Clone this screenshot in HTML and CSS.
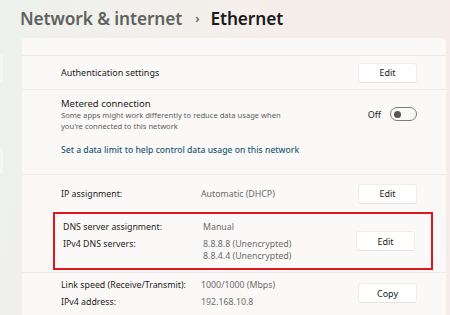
FILE: index.html
```html
<!DOCTYPE html>
<html>
<head>
<meta charset="utf-8">
<link rel="stylesheet" href="styles.css">
</head>
<body>
<div class="page">
  <div class="nav">
    <div class="nav-sel one"></div>
    <div class="nav-sel two"></div>
  </div>
  <div class="content">
    <h1 class="title"><span class="crumb">Network &amp; internet</span><span class="chev">›</span><span class="current">Ethernet</span></h1>
    <div class="card">
      <div class="row-top"></div>
      <div class="row row-auth">
        <span class="label">Authentication settings</span>
        <button class="btn">Edit</button>
      </div>
      <div class="metered">
        <div class="metered-head">
          <div class="metered-text">
            <div class="m-title">Metered connection</div>
            <div class="m-desc">Some apps might work differently to reduce data usage when<br>you're connected to this network</div>
          </div>
          <div class="toggle-wrap">
            <span class="off">Off</span>
            <span class="toggle"><span class="knob"></span></span>
          </div>
        </div>
        <a class="link">Set a data limit to help control data usage on this network</a>
      </div>
      <div class="props">
        <div class="prop-group g-ip">
          <div class="kv">
            <div class="kv-row"><span class="k">IP assignment:</span><span class="v">Automatic (DHCP)</span></div>
          </div>
          <button class="btn">Edit</button>
        </div>
        <div class="prop-group g-dns">
          <div class="kv">
            <div class="kv-row"><span class="k">DNS server assignment:</span><span class="v">Manual</span></div>
            <div class="kv-row"><span class="k">IPv4 DNS servers:</span><span class="v">8.8.8.8 (Unencrypted)<br>8.8.4.4 (Unencrypted)</span></div>
          </div>
          <button class="btn">Edit</button>
        </div>
      </div>
      <div class="prop-group g-link">
        <div class="kv">
          <div class="kv-row"><span class="k">Link speed (Receive/Transmit):</span><span class="v">1000/1000 (Mbps)</span></div>
          <div class="kv-row"><span class="k">IPv4 address:</span><span class="v">192.168.10.8</span></div>
        </div>
        <button class="btn">Copy</button>
      </div>
    </div>
  </div>
</div>
</body>
</html>
```

FILE: styles.css
```css
* { box-sizing: border-box; }
html, body { margin: 0; padding: 0; }
body {
  width: 450px;
  height: 315px;
  overflow: hidden;
  font-family: "Noto Sans", "Open Sans", sans-serif;
  background: linear-gradient(100deg, #eef1ed 0%, #f3efeb 45%, #f6ece8 100%);
  color: #1b1b1b;
}
.page { display: flex; height: 315px; }
.nav { width: 4px; flex: none; display: flex; flex-direction: column; }
.nav-sel { background: #f6f7f5; width: 3px; }
.nav-sel.one { margin-top: 55px; height: 28px; }
.nav-sel.two { margin-top: 65px; height: 25px; }
.content { flex: 1; padding-left: 18px; padding-right: 4px; }
.title {
  margin: 0;
  height: 38px;
  display: flex;
  align-items: center;
  padding-bottom: 1px;
  font-size: 17.3px;
  font-weight: 600;
  letter-spacing: -0.1px;
}
.crumb { color: #5e625f; margin-left: -2px; }
.chev { color: #5e625f; font-size: 12.5px; margin: 0 11px 0 13px; font-weight: 600; }
.current { color: #1a1a1a; }
.card {
  background: #fbf9f7;
  border-radius: 4px 4px 0 0;
  height: 277px;
  font-size: 9px;
}
.row-top { height: 18px; border-bottom: 1px solid #efebe8; }
.row {
  display: flex;
  align-items: center;
  justify-content: space-between;
  padding: 0 29px 0 39px;
}
.row-auth { height: 34px; border-bottom: 1px solid #efebe8; }
.btn {
  font-family: inherit;
  font-size: 9px;
  color: #1b1b1b;
  background: #fefefe;
  border: 1px solid #f0eeec;
  border-bottom-color: #e6e3e0;
  border-radius: 3px;
  width: 59px;
  height: 20px;
  padding: 0;
}
.metered { height: 85px; padding: 7px 29px 0 39px; border-bottom: 1px solid #efebe8; }
.metered-head { display: flex; justify-content: space-between; align-items: flex-start; }
.m-title { font-size: 9.5px; line-height: 13px; }
.m-desc { font-size: 7.6px; color: #5c5c5c; line-height: 11px; }
.toggle-wrap { display: flex; align-items: center; margin-top: 10px; }
.off { font-size: 9px; margin-right: 9px; }
.toggle {
  width: 27px; height: 14px;
  border: 1px solid #7d7d7d;
  border-radius: 7px;
  display: flex; align-items: center;
  padding-left: 2.5px;
}
.knob { width: 7px; height: 7px; border-radius: 50%; background: #555; }
.link {
  display: block;
  margin-top: 12px;
  color: #1e5a73;
  font-weight: 500;
  font-size: 8.6px;
}
.prop-group {
  display: flex;
  justify-content: space-between;
  align-items: center;
  padding: 0 29px 0 39px;
}
.g-ip { height: 37px; padding-top: 0; }
.g-dns {
  margin: 0 13px 0 31px;
  padding: 0 16px 0 8px;
  height: 58px;
  border: 2px solid #e01520;
}
.props { border-bottom: 1px solid #efebe8; padding-bottom: 2px; }
.g-link { height: 40px; align-items: center; }
.kv { display: flex; flex-direction: column; gap: 5px; }
.kv-row { display: flex; line-height: 12px; font-size: 8.8px; }
.k { width: 140px; flex: none; }
.v { color: #6b6b6b; }
```
